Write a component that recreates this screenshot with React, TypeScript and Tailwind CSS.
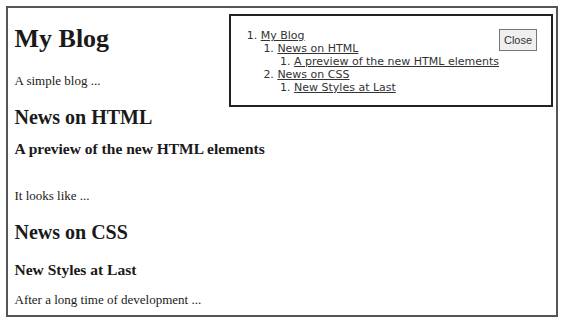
import React from "react";

export default function App() {
  const serif = { fontFamily: '"Liberation Serif", "Times New Roman", serif' };
  return (
    <div className="w-[565px] h-[323px] bg-white relative overflow-hidden">
      <div
        className="absolute left-[6px] top-[6px] w-[552px] h-[311px] border-2 border-[#555] px-[6.5px] flex flex-col text-[#1a1a1a]"
        style={serif}
      >
        <h1 className="mt-[15.5px] text-[26px] leading-[30px] font-bold">My Blog</h1>
        <p className="mt-[19.6px] text-[13px] leading-[15px]">A simple blog ...</p>
        <h2 className="mt-[17.6px] text-[20px] leading-[23px] font-bold">News on HTML</h2>
        <h3 className="mt-[11px] text-[15.5px] leading-[18px] font-bold">A preview of the new HTML elements</h3>
        <p className="mt-[30.3px] text-[13px] leading-[15px]">It looks like ...</p>
        <h2 className="mt-[17.6px] text-[20px] leading-[23px] font-bold">News on CSS</h2>
        <h3 className="mt-[17px] text-[15.5px] leading-[18px] font-bold">New Styles at Last</h3>
        <p className="mt-[13.3px] text-[13px] leading-[15px]">After a long time of development ...</p>
      </div>

      <nav
        className="absolute left-[229px] top-[14px] w-[324px] h-[93px] border-2 border-[#222] bg-white pt-[13px] text-[11px] leading-[13px] text-[#333]"
        style={{ fontFamily: '"DejaVu Sans", Verdana, sans-serif' }}
      >
        <ol className="list-decimal pl-[29.7px]">
          <li>
            <a className="underline">My Blog</a>
            <ol className="list-decimal pl-[16.7px]">
              <li>
                <a className="underline">News on HTML</a>
                <ol className="list-decimal pl-[16.7px]">
                  <li>
                    <a className="underline">A preview of the new HTML elements</a>
                  </li>
                </ol>
              </li>
              <li>
                <a className="underline">News on CSS</a>
                <ol className="list-decimal pl-[16.7px]">
                  <li>
                    <a className="underline">New Styles at Last</a>
                  </li>
                </ol>
              </li>
            </ol>
          </li>
        </ol>
        <button
          className="absolute right-[14px] top-[13px] w-[38px] h-[22px] bg-[#efefef] border border-[#767676] text-[11px] text-[#333] flex items-center justify-center"
          style={{ fontFamily: '"Liberation Sans", Arial, sans-serif' }}
        >
          Close
        </button>
      </nav>
    </div>
  );
}
